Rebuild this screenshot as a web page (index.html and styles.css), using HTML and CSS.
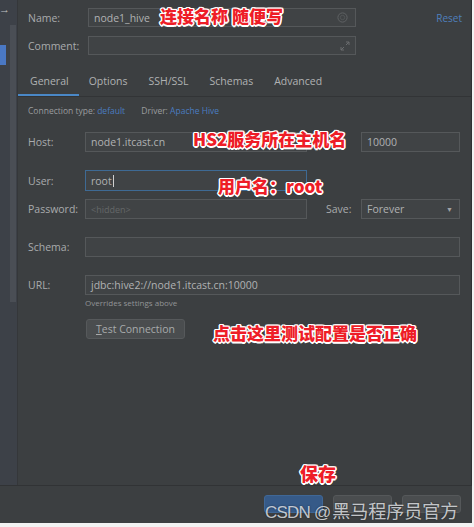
FILE: index.html
```html
<!DOCTYPE html>
<html>
<head>
<meta charset="utf-8">
<link rel="stylesheet" href="styles.css">
</head>
<body>
<div class="app">
  <div class="workspace">
    <aside class="sidebar">
      <div class="side-arrow">→</div>
      <div class="side-body">
        <div class="side-list"><div class="side-sel"></div></div>
        <div class="side-track"></div>
      </div>
    </aside>
    <main class="panel">
      <div class="head">
        <div class="hrow">
          <span class="lbl lbl-head">Name:</span>
          <div class="box box-head">
            <span class="val">node1_hive</span>
            <svg class="clear" width="11" height="11" viewBox="0 0 11 11"><circle cx="5.5" cy="5.5" r="4.6" fill="none" stroke="#5f6264" stroke-width="1"/><circle cx="5.5" cy="5.5" r="2.2" fill="none" stroke="#56595b" stroke-width="0.8"/></svg>
          </div>
          <a class="reset">Reset</a>
        </div>
        <div class="hrow hrow-2">
          <span class="lbl lbl-head">Comment:</span>
          <div class="box box-head">
            <svg class="expand" width="10" height="10" viewBox="0 0 10 10"><path d="M6 1h3v3M9 1L6 4M1 6v3h3M1 9l3-3" fill="none" stroke="#6a6d6f" stroke-width="1"/></svg>
          </div>
        </div>
      </div>
      <nav class="tabs">
        <span class="tab tab-on">General</span>
        <span class="tab">Options</span>
        <span class="tab">SSH/SSL</span>
        <span class="tab">Schemas</span>
        <span class="tab">Advanced</span>
      </nav>
      <div class="info">
        <span>Connection type:</span> <span class="link">default</span>
        <span class="info-gap">Driver:</span> <span class="link">Apache Hive</span>
      </div>
      <div class="form">
        <div class="frow frow-host">
          <span class="lbl">Host:</span>
          <div class="box"><span class="val">node1.itcast.cn</span></div>
          <span></span>
          <div class="box"><span class="val">10000</span></div>
        </div>
        <div class="frow frow-user">
          <span class="lbl">User:</span>
          <div class="box box-focus"><span class="val">root</span><span class="caret"></span></div>
        </div>
        <div class="frow frow-pass">
          <span class="lbl">Password:</span>
          <div class="box"><span class="ph">&lt;hidden&gt;</span></div>
          <span class="lbl lbl-save">Save:</span>
          <div class="box box-drop"><span class="val">Forever</span><span class="drop-arrow">▼</span></div>
        </div>
        <div class="frow frow-schema">
          <span class="lbl">Schema:</span>
          <div class="box box-wide"></div>
        </div>
        <div class="frow frow-url">
          <span class="lbl">URL:</span>
          <div class="box box-wide"><span class="val">jdbc:hive2://node1.itcast.cn:10000</span></div>
        </div>
        <div class="hint">Overrides settings above</div>
        <button class="test"><u>T</u>est Connection</button>
      </div>
    </main>
  </div>
  <footer class="bottom">
    <span class="btn btn-ok"></span>
    <span class="btn"></span>
    <span class="btn"></span>
  </footer>

  <div class="note note-name">连接名称 随便写</div>
  <div class="note note-host">HS2服务所在主机名</div>
  <div class="note note-user">用户名：root</div>
  <div class="note note-test">点击这里测试配置是否正确</div>
  <div class="note note-save">保存</div>
  <div class="watermark"><span class="wm-lat">CSDN @</span><span class="wm-cjk">黑马程序员官方</span></div>
</div>
</body>
</html>
```
FILE: styles.css
```css
* { box-sizing: border-box; }
html, body { margin: 0; padding: 0; background: #f2f2f2; }
body { width: 474px; height: 527px; overflow: hidden; font-family: "Open Sans", "Noto Sans", sans-serif; }

.app {
  position: relative;
  width: 472px;
  height: 523px;
  background: #3c3f41;
  display: flex;
  flex-direction: column;
  color: #b4b6b7;
}

.workspace { display: flex; height: 486px; border-bottom: 1px solid #313335; }

.sidebar {
  width: 18px;
  background: #3d4148;
  border-right: 1px solid #35373a;
  display: flex;
  flex-direction: column;
}
.side-arrow { height: 25px; font-size: 11px; line-height: 18px; color: #c0c2c4; margin-left: -1px; }
.side-body { display: flex; }
.side-list { width: 10px; padding-top: 20px; }
.side-sel { width: 6px; height: 20px; background: #4a78c4; }
.side-track { width: 6px; height: 277px; background: #4a4e55; }

.panel { flex: 1; display: flex; flex-direction: column; border-right: 1px solid #2f3133; }

.head { padding: 8px 9px 0 10px; }
.hrow { display: flex; align-items: center; }
.hrow-2 { margin-top: 9px; }
.lbl { font-size: 10.5px; color: #a9abad; }
.lbl-head { width: 60px; }

.box {
  position: relative;
  height: 20px;
  border: 1px solid #55585a;
  background: #404345;
  display: flex;
  align-items: center;
  padding-left: 5px;
}
.box-head { width: 268px; height: 19px; }
.val { font-size: 10.5px; color: #b0b2b3; }
.clear { position: absolute; right: 7px; top: 3px; }
.expand { position: absolute; right: 5px; top: 4px; }
.reset { margin-left: auto; font-size: 10px; color: #4f7fbd; }

.tabs {
  margin-top: 13px;
  display: flex;
  border-bottom: 1px solid #323436;
  height: 29px;
}
.tab { padding: 0 11px 0 11px; margin-right: -1px; font-size: 10.5px; line-height: 27px; color: #b0b2b3; }
.tab:first-child { padding-left: 12px; padding-right: 10px; }
.tab-on { border-bottom: 2px solid #4a88c7; }

.info { margin-top: 8px; padding-left: 10px; font-size: 8.5px; color: #9a9c9e; }
.info .link { color: #4a7cc0; }
.info-gap { margin-left: 14px; }

.form { padding-left: 10px; }
.frow {
  display: grid;
  grid-template-columns: 57px 222px 54px 99px;
  align-items: center;
}
.frow-host { margin-top: 16px; }
.frow-user { margin-top: 18px; }
.frow-pass { margin-top: 8px; }
.frow-schema { margin-top: 18px; }
.frow-url { margin-top: 18px; }
.box-wide { grid-column: 2 / 5; }
.box-focus { border: 1.5px solid #3e6a94; height: 21px; }
.caret { width: 1px; height: 12px; background: #d0d0d0; margin-left: 1px; }
.ph { font-size: 9px; color: #646768; }
.lbl-save { padding-left: 19px; }
.box-drop { justify-content: space-between; padding-right: 6px; }
.drop-arrow { font-size: 7px; color: #a0a2a4; }

.hint { margin: 2px 0 0 57px; font-size: 8px; color: #929496; }
.test {
  display: block;
  margin: 11px 0 0 58px;
  width: 99px;
  height: 20px;
  padding: 0;
  border: 1px solid #56595b;
  border-radius: 3px;
  background: #4a4d4f;
  font-family: "Open Sans", sans-serif;
  font-size: 10.5px;
  color: #a8aaab;
}

.bottom {
  flex: 1;
  display: flex;
  justify-content: flex-end;
  align-items: center;
  padding: 0 11px 2px 0;
  gap: 10px;
}
.btn {
  width: 59px;
  height: 18px;
  border: 1px solid #55585a;
  border-radius: 3px;
  background: #4a4d4f;
}
.btn-ok { background: #365a88; border-color: #3f6796; }

.note {
  position: absolute;
  font-family: "Noto Sans CJK SC", "Noto Sans", sans-serif;
  font-weight: 900;
  font-size: 17px;
  line-height: 20px;
  color: #ee1d27;
  white-space: nowrap;
  text-shadow:
    1.5px 0 0 #fff, -1.5px 0 0 #fff, 0 1.5px 0 #fff, 0 -1.5px 0 #fff,
    1px 1px 0 #fff, -1px -1px 0 #fff, 1px -1px 0 #fff, -1px 1px 0 #fff;
}
.note-name { left: 160px; top: 6px; }
.note-host { left: 193px; top: 129px; }
.note-user { left: 218px; top: 176px; }
.note-test { left: 213px; top: 323px; }
.note-save { left: 300px; top: 463px; font-size: 18px; }

.watermark {
  position: absolute;
  left: 265px;
  top: 498px;
  line-height: 24px;
  color: rgba(235, 238, 242, 0.8);
  white-space: nowrap;
  text-shadow: 0 0 2px rgba(0,0,0,0.5);
}
.wm-lat { font-family: "Liberation Sans", sans-serif; font-size: 17px; letter-spacing: -0.8px; }
.wm-cjk { font-family: "Noto Sans CJK SC", sans-serif; font-size: 18px; margin-left: 2px; }
```
